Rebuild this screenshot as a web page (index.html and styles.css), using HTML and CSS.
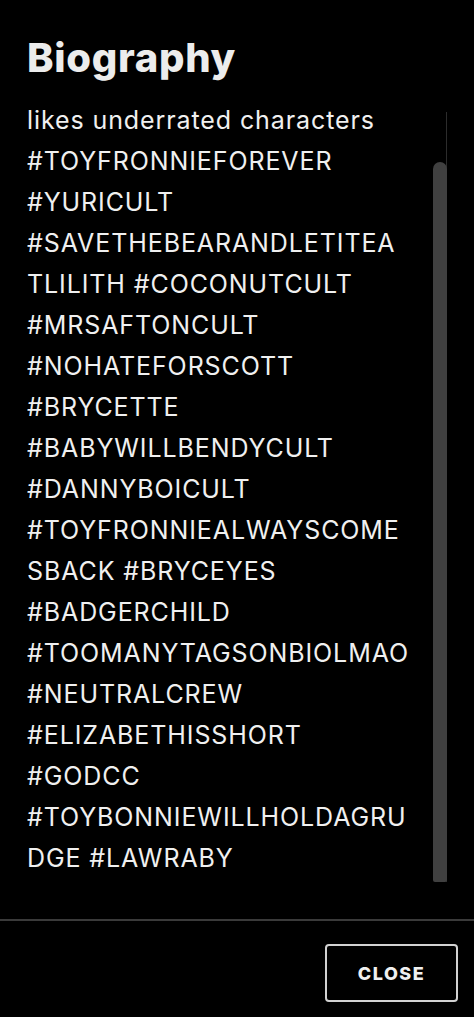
FILE: index.html
```html
<!DOCTYPE html>
<html lang="en">
<head>
  <meta charset="UTF-8" />
  <meta name="viewport" content="width=device-width, initial-scale=1.0" />
  <title>Biography</title>
  <link rel="stylesheet" href="styles.css">
</head>
<body>
  <div class="modal">
    <h1 class="title">Biography</h1>

    <div class="bio-wrap">
      <div class="bio-scroll" id="bioScroll">
        <p class="bio-text">likes underrated characters #TOYFRONNIEFOREVER #YURICULT #SAVETHEBEARANDLETITEATLILITH #COCONUTCULT #MRSAFTONCULT #NOHATEFORSCOTT #BRYCETTE #BABYWILLBENDYCULT #DANNYBOICULT #TOYFRONNIEALWAYSCOMESBACK #BRYCEYES #BADGERCHILD #TOOMANYTAGSONBIOLMAO #NEUTRALCREW #ELIZABETHISSHORT #GODCC #TOYBONNIEWILLHOLDAGRUDGE #LAWRABY</p>
      </div>
      <div class="scrollbar">
        <div class="scrollbar-thumb"></div>
      </div>
    </div>

    <div class="footer">
      <button class="close-btn" type="button">CLOSE</button>
    </div>
  </div>

  <script src="script.js"></script>
</body>
</html>
```

FILE: styles.css
```css
body {
  margin: 0;
  background-color: #000;
  color: #f0f0f0;
  font-family: Inter, "Noto Sans", sans-serif;
}

.modal {
  height: 1017px;
  display: flex;
  flex-direction: column;
}

.title {
  margin: 0;
  padding: 34px 27px 0;
  font-size: 40px;
  font-weight: 800;
  line-height: 48px;
  letter-spacing: 0.7px;
  color: #ececec;
}

.bio-wrap {
  position: relative;
  margin: 24px 26px 0 27px;
}

.bio-scroll {
  height: 776px;
  overflow-y: scroll;
  scrollbar-width: none;
}

.bio-scroll::-webkit-scrollbar {
  display: none;
}

.bio-text {
  width: 382px;
  margin: 0;
  padding: 60px 0 3px;
  font-size: 25px;
  line-height: 41px;
  letter-spacing: 0.9px;
  overflow-wrap: anywhere;
}

/* drawn scrollbar, the real one is hidden */
.scrollbar {
  position: absolute;
  top: 6px;
  right: 0;
  bottom: 0;
  width: 15px;
  display: flex;
  flex-direction: column;
  justify-content: flex-end;
  background: linear-gradient(to left, transparent 1px, #2c2c2c 1px, #2c2c2c 2px, transparent 2px);
}

.scrollbar-thumb {
  height: 720px;
  margin-right: 1px;
  background-color: #404040;
  border-radius: 7px 7px 2px 2px;
}

.footer {
  margin-top: 37px;
  border-top: 2px solid #3a3a3a;
  display: flex;
  justify-content: flex-end;
  padding: 23px 16px 0;
}

.close-btn {
  width: 133px;
  height: 58px;
  background: transparent;
  border: 2px solid #d2d2d2;
  border-radius: 4px;
  color: #f0f0f0;
  font-family: Inter, "Noto Sans", sans-serif;
  font-size: 18px;
  font-weight: 800;
  letter-spacing: 1.5px;
  cursor: pointer;
}
```

FILE: script.js
```js
const bioScroll = document.getElementById("bioScroll");
bioScroll.scrollTop = bioScroll.scrollHeight;
```
